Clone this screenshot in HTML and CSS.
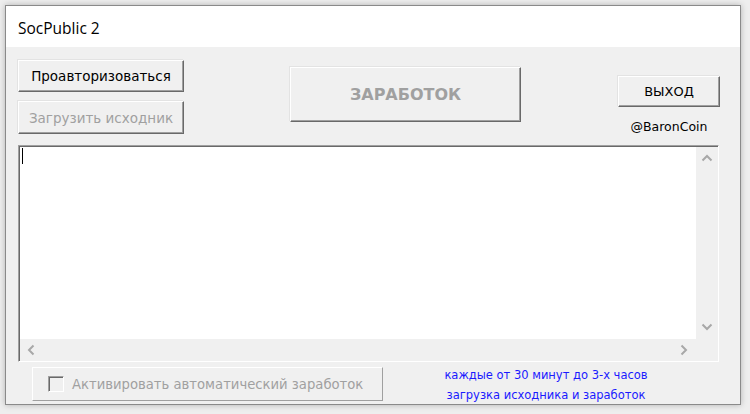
FILE: index.html
```html
<!DOCTYPE html>
<html>
<head>
    <meta charset="UTF-8">
    <title>SocPublic 2</title>
    <link rel="stylesheet" href="styles.css">
</head>
<body>
    <div class="window">
        <!--заголовок окна-->
        <div class="titlebar">SocPublic 2</div>

        <div class="client">
            <!--кнопки-->
            <div class="top_row">
                <div class="left_col">
                    <div class="btn btn_auth">Проавторизоваться</div>
                    <div class="btn btn_load disabled">Загрузить исходник</div>
                </div>
                <div class="btn btn_earn disabled">ЗАРАБОТОК</div>
                <div class="right_col">
                    <div class="btn btn_exit">ВЫХОД</div>
                    <div class="author">@BaronCoin</div>
                </div>
            </div>

            <!--лог-->
            <div class="log_box">
                <div class="log_text"><span class="caret"></span></div>
                <div class="vscroll">
                    <svg width="12" height="8" viewBox="0 0 12 8"><polyline points="1.5,6.5 6,2 10.5,6.5" fill="none" stroke="#a8a8a8" stroke-width="2"/></svg>
                    <svg width="12" height="8" viewBox="0 0 12 8"><polyline points="1.5,1.5 6,6 10.5,1.5" fill="none" stroke="#a8a8a8" stroke-width="2"/></svg>
                </div>
                <div class="hscroll">
                    <svg width="8" height="12" viewBox="0 0 8 12"><polyline points="6.5,1.5 2,6 6.5,10.5" fill="none" stroke="#a8a8a8" stroke-width="2"/></svg>
                    <svg width="8" height="12" viewBox="0 0 8 12"><polyline points="1.5,1.5 6,6 1.5,10.5" fill="none" stroke="#a8a8a8" stroke-width="2"/></svg>
                </div>
                <div class="corner"></div>
            </div>

            <!--нижняя строка-->
            <div class="bottom_row">
                <div class="check_box">
                    <span class="check"></span>
                    <span class="check_label">Активировать автоматический заработок</span>
                </div>
                <div class="note">
                    <div>каждые от 30 минут до 3-х часов</div>
                    <div>загрузка исходника и заработок</div>
                </div>
            </div>
        </div>
    </div>
</body>
</html>
```
FILE: styles.css
```css
/*общие стили*/
* {padding:0;margin:0;box-sizing:border-box;}
html,body {width:100%;height:100%;}
body {background:#eeeeee;font-family:"DejaVu Sans","Liberation Sans",sans-serif;font-size:13.5px;color:#000;}

.window {
    width:736px;height:400px;
    margin:5px 0 0 5px;
    border:1px solid #8a8a8a;
    background:#f0f0f0;
    box-shadow:0 0 6px rgba(0,0,0,0.25);
    display:flex;flex-direction:column;
    overflow:hidden;
}
.titlebar {flex-shrink:0;height:41px;background:#fff;padding:2px 0 0 12px;display:flex;align-items:center;font-family:"Open Sans","Noto Sans",sans-serif;font-size:15.5px;color:#000;}

.client {flex:1;padding:13px 20px 0 12px;display:flex;flex-direction:column;}

/*кнопки*/
.btn {
    display:flex;align-items:center;justify-content:center;
    background:#f0f0f0;
    border-top:1px solid #fff;border-left:1px solid #fff;
    border-right:1px solid #696969;border-bottom:1px solid #696969;
    box-shadow:inset -1px -1px 0 #a0a0a0, -1px -1px 0 #e3e3e3;
    white-space:nowrap;
}
.btn.disabled {color:#a0a0a0;}

.top_row {display:flex;height:74px;flex-shrink:0;}
.left_col {width:166px;display:flex;flex-direction:column;gap:9px;}
.btn_auth {height:32px;}
.btn_load {height:33px;}
.btn_earn {width:231px;height:55px;margin:7px 0 0 106px;font-weight:bold;font-size:16px;}
.right_col {width:102px;margin:16px 0 0 auto;display:flex;flex-direction:column;align-items:center;}
.btn_exit {width:102px;height:33px;font-size:13px;}
.author {margin-top:12px;font-size:12.5px;}

/*лог*/
.log_box {
    flex-shrink:0;
    margin-top:11px;height:217px;width:701px;
    border-top:1px solid #a0a0a0;border-left:1px solid #a0a0a0;
    border-right:1px solid #fff;border-bottom:1px solid #fff;
    box-shadow:inset 1px 1px 0 #696969;
    display:grid;grid-template-columns:1fr 22px;grid-template-rows:1fr 22px;
    padding:1px 0 0 1px;
}
.log_text {background:#fff;padding:1px 0 0 2px;}
.caret {display:block;width:1px;height:16px;background:#000;}
.vscroll {background:#f0f0f0;display:flex;flex-direction:column;justify-content:space-between;align-items:center;padding:7px 0 8px;}
.hscroll {background:#f0f0f0;display:flex;justify-content:space-between;align-items:center;padding:0 8px 0 7px;}
.corner {background:#f0f0f0;}

/*нижняя строка*/
.bottom_row {display:flex;margin-top:5px;height:34px;}
.check_box {
    width:351px;height:34px;margin-left:14px;
    display:flex;align-items:center;gap:8px;padding-left:15px;
    border-top:1px solid #fff;border-left:1px solid #fff;
    border-right:1px solid #a0a0a0;border-bottom:1px solid #a0a0a0;
    color:#a0a0a0;font-size:13.2px;
}
.check {flex-shrink:0;width:16px;height:16px;border-top:1px solid #a0a0a0;border-left:1px solid #a0a0a0;border-right:1px solid #fff;border-bottom:1px solid #fff;box-shadow:inset 1px 1px 0 #696969;background:#f0f0f0;}
.note {width:260px;margin-left:33px;text-align:center;color:#1a1aff;font-size:11.5px;line-height:20px;margin-top:-2px;}
```
